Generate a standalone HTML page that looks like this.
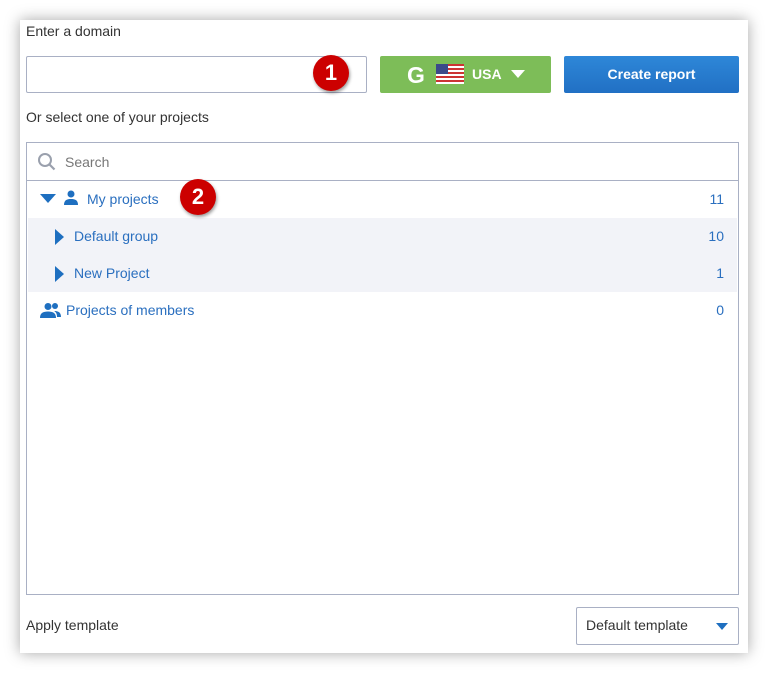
<!DOCTYPE html>
<html><head><style>
body{margin:0;width:768px;height:673px;background:#fff;font-family:"Liberation Sans",sans-serif;position:relative;overflow:hidden}
.panel{position:absolute;left:20px;top:20px;width:728px;height:633px;background:#fff;box-shadow:0 0 14px rgba(0,0,0,.35)}
.abs{position:absolute}
.t{font-size:14px;color:#333}
.blue{color:#2a6fbf;font-size:14px}
.badge{position:absolute;width:36px;height:36px;border-radius:50%;background:#c00;color:#fff;font-size:22px;font-weight:bold;text-align:center;line-height:36px;box-shadow:1px 2px 3px rgba(0,0,0,.4)}
.row{position:absolute;left:1px;right:1px;height:37px}
.cnt{position:absolute;right:13px;top:10px;font-size:14px;color:#2a6fbf}
</style></head><body>
<div class="panel"></div>
<div class="abs t" style="left:26px;top:23px">Enter a domain</div>
<div class="abs" style="left:26px;top:56px;width:339px;height:35px;border:1px solid #a9b0c4;border-radius:2px"></div>
<div class="badge" style="left:313px;top:55px">1</div>
<div class="abs" style="left:380px;top:56px;width:171px;height:37px;background:#7dbd58;border-radius:2px;color:#fff;font-weight:bold">
 <span class="abs" style="left:27px;top:6px;font-size:23px">G</span>
 <svg class="abs" style="left:56px;top:8px" width="28" height="20" viewBox="0 0 28 20"><rect width="28" height="20" fill="#fff"/><g fill="#c33"><rect y="0" width="28" height="2"/><rect y="4" width="28" height="2"/><rect y="8" width="28" height="2"/><rect y="12" width="28" height="2"/><rect y="16" width="28" height="2"/></g><rect width="12" height="10" fill="#3b4a8a"/></svg>
 <span class="abs" style="left:92px;top:10px;font-size:14px">USA</span>
 <svg class="abs" style="left:131px;top:13px" width="14" height="10"><path d="M0 1h14L7 9z" fill="#fff"/></svg>
</div>
<div class="abs" style="left:564px;top:56px;width:175px;height:37px;background:linear-gradient(#2e87d8,#2170c4);border-radius:2px;color:#fff;font-weight:bold;font-size:14px;text-align:center;line-height:37px">Create report</div>
<div class="abs t" style="left:26px;top:109px">Or select one of your projects</div>
<div class="abs" style="left:26px;top:142px;width:711px;height:451px;border:1px solid #a9b0c4">
 <svg class="abs" style="left:10px;top:9px" width="20" height="20"><circle cx="8" cy="8" r="6" fill="none" stroke="#9aa0ad" stroke-width="2"/><path d="M12.5 12.5l5 5" stroke="#9aa0ad" stroke-width="2.2"/></svg>
 <span class="abs" style="left:38px;top:11px;font-size:14px;color:#777">Search</span>
 <div class="abs" style="left:0;right:0;top:37px;border-top:1px solid #a9b0c4"></div>
 <div class="row" style="top:38px">
  <svg class="abs" style="left:12px;top:13px" width="16" height="10"><path d="M0 0h16L8 9z" fill="#1e6fc0"/></svg>
  <svg class="abs" style="left:35px;top:9px" width="16" height="16"><circle cx="8" cy="4" r="3.5" fill="#1e6fc0"/><path d="M1 15c0-5 3-6 7-6s7 1 7 6z" fill="#1e6fc0"/></svg>
  <span class="abs blue" style="left:59px;top:10px">My projects</span>
  <span class="cnt">11</span>
 </div>
 <div class="row" style="top:75px;background:#f2f3f8">
  <svg class="abs" style="left:27px;top:11px" width="10" height="16"><path d="M0 0l9 8-9 8z" fill="#1e6fc0"/></svg>
  <span class="abs blue" style="left:46px;top:10px">Default group</span>
  <span class="cnt">10</span>
 </div>
 <div class="row" style="top:112px;background:#f2f3f8">
  <svg class="abs" style="left:27px;top:11px" width="10" height="16"><path d="M0 0l9 8-9 8z" fill="#1e6fc0"/></svg>
  <span class="abs blue" style="left:46px;top:10px">New Project</span>
  <span class="cnt">1</span>
 </div>
 <div class="row" style="top:149px">
  <svg class="abs" style="left:12px;top:10px" width="22" height="16"><circle cx="8" cy="4.5" r="3.5" fill="#1e6fc0"/><circle cx="15" cy="4" r="3" fill="#1e6fc0"/><path d="M0 16c0-5 3-6.5 8-6.5s8 1.5 8 6.5z" fill="#1e6fc0"/><path d="M14 9c4 0 7 1 7 6h-4c0-3-1-5-3-6z" fill="#1e6fc0"/></svg>
  <span class="abs blue" style="left:38px;top:10px">Projects of members</span>
  <span class="cnt">0</span>
 </div>
</div>
<div class="badge" style="left:180px;top:179px">2</div>
<div class="abs t" style="left:26px;top:617px">Apply template</div>
<div class="abs" style="left:576px;top:607px;width:161px;height:36px;border:1px solid #a9b0c4;border-radius:2px">
 <span class="abs t" style="left:9px;top:9px">Default template</span>
 <svg class="abs" style="left:139px;top:15px" width="12" height="8"><path d="M0 0h12L6 7z" fill="#1e6fc0"/></svg>
</div>
</body></html>
